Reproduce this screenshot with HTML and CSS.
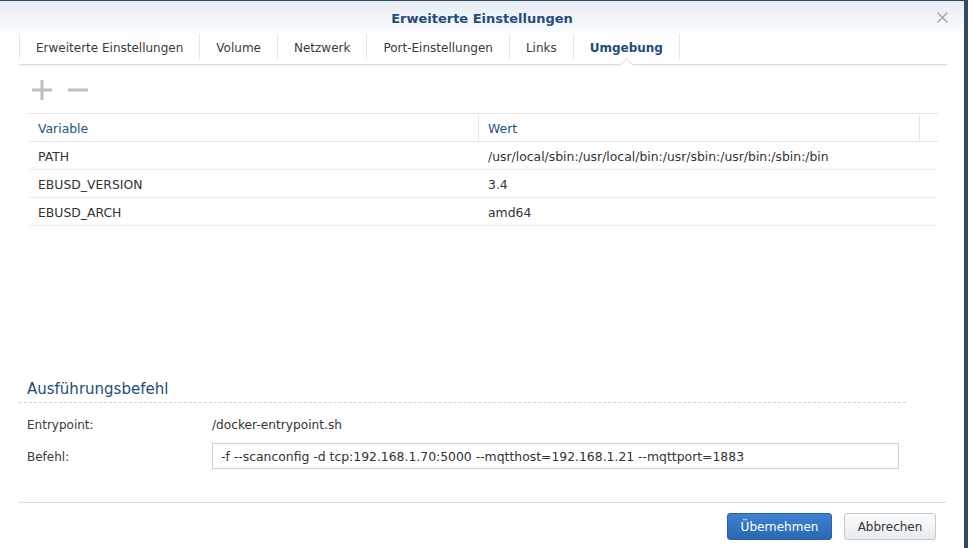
FILE: index.html
```html
<!DOCTYPE html>
<html lang="de">
<head>
    <meta charset="UTF-8">
    <meta name="viewport" content="width=device-width, initial-scale=1.0">
    <title>Erweiterte Einstellungen</title>
    <link rel="stylesheet" href="styles.css">
</head>
<body>
    <div class="dialog">
        <div class="header">
            <span></span>
            <h1 class="title">Erweiterte Einstellungen</h1>
            <button class="close" title="Schließen">
                <svg width="11" height="11" viewBox="0 0 11 11">
                    <path d="M0.5 0.5 L10.5 10.5 M10.5 0.5 L0.5 10.5" stroke="#a3a3a3" stroke-width="1.4" fill="none"/>
                </svg>
            </button>
        </div>

        <div class="tabs">
            <div class="tab">Erweiterte Einstellungen</div>
            <div class="tab">Volume</div>
            <div class="tab">Netzwerk</div>
            <div class="tab">Port-Einstellungen</div>
            <div class="tab">Links</div>
            <div class="tab active">Umgebung</div>
        </div>

        <div class="panel">
            <div class="toolbar">
                <svg width="20" height="20" viewBox="0 0 20 20">
                    <rect x="0" y="8.5" width="20" height="3" fill="#bdbdbd"/>
                    <rect x="8.5" y="0" width="3" height="20" fill="#bdbdbd"/>
                </svg>
                <svg width="20" height="20" viewBox="0 0 20 20">
                    <rect x="0" y="8.5" width="20" height="3" fill="#bdbdbd"/>
                </svg>
            </div>

            <div class="grid">
                <div class="grid-head">
                    <div class="col-var">Variable</div>
                    <div class="col-val">Wert</div>
                    <div class="col-scroll"></div>
                </div>
                <div class="grid-row">
                    <div class="col-var">PATH</div>
                    <div class="col-val">/usr/local/sbin:/usr/local/bin:/usr/sbin:/usr/bin:/sbin:/bin</div>
                </div>
                <div class="grid-row">
                    <div class="col-var">EBUSD_VERSION</div>
                    <div class="col-val">3.4</div>
                </div>
                <div class="grid-row">
                    <div class="col-var">EBUSD_ARCH</div>
                    <div class="col-val">amd64</div>
                </div>
            </div>
        </div>

        <div class="section">
            <h2 class="section-title">Ausführungsbefehl</h2>
            <div class="form">
                <div class="form-row">
                    <label>Entrypoint:</label>
                    <span class="value">/docker-entrypoint.sh</span>
                </div>
                <div class="form-row">
                    <label for="cmd">Befehl:</label>
                    <input type="text" id="cmd" value="-f --scanconfig -d tcp:192.168.1.70:5000 --mqtthost=192.168.1.21 --mqttport=1883">
                </div>
            </div>
        </div>

        <div class="footer">
            <button class="btn primary">Übernehmen</button>
            <button class="btn">Abbrechen</button>
        </div>
    </div>
</body>
</html>
```

FILE: styles.css
```css
* {
    box-sizing: border-box;
}
html, body {
    margin: 0;
    padding: 0;
}
body {
    background: #34495f;
    font-family: "DejaVu Sans", Verdana, sans-serif;
    font-size: 12px;
    color: #333;
    width: 968px;
    height: 548px;
    overflow: hidden;
}
.dialog {
    width: 964px;
    height: 547px;
    margin-top: 1px;
    background: #fff;
}
.header {
    height: 32px;
    display: grid;
    grid-template-columns: 1fr auto 1fr;
    align-items: center;
    background: linear-gradient(#e6ecf3, #fbfcfe);
}
.title {
    margin: 0;
    font-size: 13px;
    font-weight: bold;
    color: #234d7c;
    padding-top: 2px;
}
.close {
    justify-self: end;
    margin-right: 16px;
    margin-top: 1px;
    padding: 0;
    border: none;
    background: none;
    width: 11px;
    height: 11px;
    display: flex;
}
.tabs {
    height: 32px;
    margin: 0 17px 0 19px;
    padding-top: 1px;
    display: flex;
    align-items: flex-start;
    border-bottom: 1px solid #dcdcdc;
    box-shadow: 0 2px 2px -1px rgba(0, 0, 0, 0.06);
}
.tab {
    height: 25px;
    line-height: 25px;
    padding: 2px 16px 0;
    border-left: 1px solid #e4e4e4;
    color: #3a3a3a;
    white-space: nowrap;
    position: relative;
}
.tab.active {
    font-weight: bold;
    color: #234d7c;
    border-right: 1px solid #e4e4e4;
}
.tab.active::after {
    content: "";
    position: absolute;
    left: 50%;
    top: 26px;
    width: 8px;
    height: 8px;
    margin-left: -4px;
    background: #fff;
    border-top: 1px solid #dcdcdc;
    border-left: 1px solid #dcdcdc;
    transform: rotate(45deg);
}
.panel {
    padding: 0 26px 0 29px;
}
.toolbar {
    height: 48px;
    display: flex;
    align-items: center;
    gap: 16px;
    padding-left: 3px;
    padding-top: 1px;
}
.grid {
    height: 265px;
    font-size: 12.4px;
}
.grid-head {
    display: flex;
    height: 29px;
    border-top: 1px solid #e2e2e2;
    border-bottom: 1px solid #e6e6e6;
    color: #255484;
    line-height: 27px;
    padding-top: 1px;
}
.grid-head .col-var {
    border-right: 1px solid #e6e6e6;
}
.grid-head .col-val {
    border-right: 1px solid #e6e6e6;
}
.grid-row {
    display: flex;
    height: 28px;
    line-height: 27px;
    padding-top: 1px;
    border-bottom: 1px solid #ececec;
    margin-right: 2px;
}
.col-var {
    width: 450px;
    padding-left: 9px;
}
.col-val {
    width: 441px;
    padding-left: 9px;
    white-space: nowrap;
}
.col-scroll {
    width: 18px;
}
.section {
    margin: 0 58px 0 19px;
}
.section-title {
    margin: 0;
    font-size: 15px;
    font-weight: normal;
    color: #234d7c;
    line-height: 20px;
    padding: 1px 8px 3px;
    border-bottom: 1px dashed #d4d4d4;
}
.form {
    padding: 8px 0 0 8px;
    display: flex;
    flex-direction: column;
    gap: 6px;
}
.form-row {
    display: flex;
    align-items: center;
    height: 26px;
}
.form-row label {
    width: 185px;
    color: #3a3a3a;
    padding-top: 1px;
}
.form-row .value {
    font-size: 12.2px;
    padding-top: 1px;
}
.form-row input {
    width: 687px;
    height: 26px;
    border: 1px solid #cfcfcf;
    padding: 0 8px;
    font-family: "DejaVu Sans", Verdana, sans-serif;
    font-size: 12.4px;
    color: #333;
    outline: none;
}
.footer {
    margin: 33px 18px 0 19px;
    border-top: 1px solid #dcdcdc;
    box-shadow: 0 -1px 1px rgba(0, 0, 0, 0.03);
    padding: 10px 10px 0 0;
    display: flex;
    justify-content: flex-end;
    gap: 12px;
}
.btn {
    height: 27px;
    padding: 0 12px;
    border-radius: 3px;
    border: 1px solid #c3cad2;
    background: linear-gradient(#fbfcfd, #e7ebef);
    font-family: "DejaVu Sans", Verdana, sans-serif;
    font-size: 12px;
    color: #333;
    min-width: 92px;
}
.btn.primary {
    min-width: 105px;
    border-color: #2862a9;
    background: linear-gradient(#3e82cf, #2967b3);
    color: #fff;
}
```
